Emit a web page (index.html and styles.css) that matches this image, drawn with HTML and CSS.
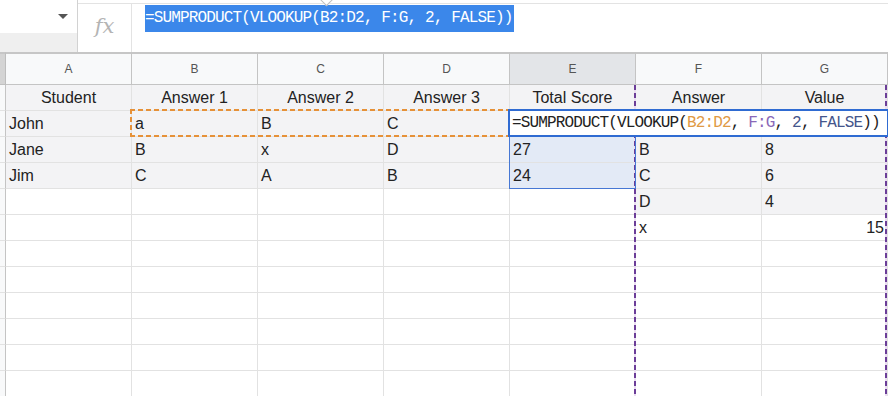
FILE: index.html
```html
<!DOCTYPE html>
<html lang="en">
  <head>
    <meta charset="UTF-8" />
    <title>Sheet</title>
    <link rel="stylesheet" href="styles.css">
  </head>
  <body>
    <div class="topbar">
      <div class="namebox">
        <div class="namebox-top"><span class="caret"></span></div>
        <div class="namebox-bottom"></div>
      </div>
      <div class="fxbox"><span>fx</span></div>
      <div class="formula">
        <span class="tip"></span>
        <span class="formula-sel">=SUMPRODUCT(VLOOKUP(B2:D2, F:G, 2, FALSE))</span>
      </div>
    </div>

    <div class="sheet">
      <!-- column headers -->
      <div class="corner"></div>
      <div class="ch">A</div>
      <div class="ch">B</div>
      <div class="ch">C</div>
      <div class="ch">D</div>
      <div class="ch active">E</div>
      <div class="ch">F</div>
      <div class="ch">G</div>

      <!-- row 1 -->
      <div class="rh"></div>
      <div class="c g center">Student</div>
      <div class="c g center">Answer 1</div>
      <div class="c g center">Answer 2</div>
      <div class="c g center">Answer 3</div>
      <div class="c g center">Total Score</div>
      <div class="c g center">Answer</div>
      <div class="c g center">Value</div>

      <!-- row 2 -->
      <div class="rh"></div>
      <div class="c g">John</div>
      <div class="c g">a</div>
      <div class="c g">B</div>
      <div class="c g">C</div>
      <div class="c g"></div>
      <div class="c g"></div>
      <div class="c g"></div>

      <!-- row 3 -->
      <div class="rh"></div>
      <div class="c g">Jane</div>
      <div class="c g">B</div>
      <div class="c g">x</div>
      <div class="c g">D</div>
      <div class="c picked">27</div>
      <div class="c g">B</div>
      <div class="c g">8</div>

      <!-- row 4 -->
      <div class="rh"></div>
      <div class="c g">Jim</div>
      <div class="c g">C</div>
      <div class="c g">A</div>
      <div class="c g">B</div>
      <div class="c picked">24</div>
      <div class="c g">C</div>
      <div class="c g">6</div>

      <!-- row 5 -->
      <div class="rh"></div>
      <div class="c"></div>
      <div class="c"></div>
      <div class="c"></div>
      <div class="c"></div>
      <div class="c"></div>
      <div class="c g">D</div>
      <div class="c g">4</div>

      <!-- row 6 -->
      <div class="rh"></div>
      <div class="c"></div>
      <div class="c"></div>
      <div class="c"></div>
      <div class="c"></div>
      <div class="c"></div>
      <div class="c">x</div>
      <div class="c num">15</div>

      <!-- empty rows -->
      <div class="rh"></div><div class="c"></div><div class="c"></div><div class="c"></div><div class="c"></div><div class="c"></div><div class="c"></div><div class="c"></div>
      <div class="rh"></div><div class="c"></div><div class="c"></div><div class="c"></div><div class="c"></div><div class="c"></div><div class="c"></div><div class="c"></div>
      <div class="rh"></div><div class="c"></div><div class="c"></div><div class="c"></div><div class="c"></div><div class="c"></div><div class="c"></div><div class="c"></div>
      <div class="rh"></div><div class="c"></div><div class="c"></div><div class="c"></div><div class="c"></div><div class="c"></div><div class="c"></div><div class="c"></div>
      <div class="rh"></div><div class="c"></div><div class="c"></div><div class="c"></div><div class="c"></div><div class="c"></div><div class="c"></div><div class="c"></div>
      <div class="rh"></div><div class="c"></div><div class="c"></div><div class="c"></div><div class="c"></div><div class="c"></div><div class="c"></div><div class="c"></div>

      <!-- overlays: ranges and the cell editor -->
      <div class="copy-range"></div>
      <div class="ref-line left"></div>
      <div class="ref-line right"></div>
      <div class="sel-box"></div>
      <div class="editor">=SUMPRODUCT(VLOOKUP(<span class="r-orange">B2:D2</span>, <span class="r-purple">F:G</span>, <span class="r-num">2</span>, <span class="r-num">FALSE</span>))</div>
    </div>
  </body>
</html>
```

FILE: styles.css
```css
body {
  margin: 0;
  width: 888px;
  height: 396px;
  overflow: hidden;
  background: #fff;
  font-family: "Liberation Sans", Arial, sans-serif;
  color: #222;
}

/* formula bar */
.topbar {
  display: flex;
  height: 52px;
}

.namebox {
  width: 77px;
  display: flex;
  flex-direction: column;
  border-right: 1px solid #d2d2d2;
}

.namebox-top {
  height: 33px;
  display: flex;
  align-items: center;
  justify-content: flex-end;
  padding-right: 9px;
}

.caret {
  width: 0;
  height: 0;
  border-left: 5px solid transparent;
  border-right: 5px solid transparent;
  border-top: 5px solid #555;
  margin-top: -1px;
}

.namebox-bottom {
  flex: 1;
  background: #efefef;
}

.fxbox {
  width: 53px;
  margin-top: 3px;
  border-top: 1px solid #e3e3e3;
  border-right: 1px solid #e3e3e3;
  display: flex;
  align-items: center;
  justify-content: center;
  padding-bottom: 4px;
}

.fxbox span {
  font-family: "DejaVu Serif", serif;
  font-style: italic;
  font-size: 21px;
  color: #b4b4b4;
}

.formula {
  flex: 1;
  position: relative;
  margin-top: 3px;
  border-top: 1px solid #e3e3e3;
  padding-left: 13px;
}

.formula-sel {
  display: inline-block;
  margin-top: 1px;
  height: 27px;
  line-height: 27px;
  background: #3b87ea;
  color: #fff;
  font-family: "Liberation Mono", monospace;
  font-size: 16px;
  letter-spacing: -0.85px;
  padding-right: 1px;
}

.tip {
  position: absolute;
  left: 189px;
  top: -11px;
  width: 10px;
  height: 10px;
  background: #fff;
  border-right: 1px solid #bdbdbd;
  border-bottom: 1px solid #bdbdbd;
  transform: rotate(45deg);
  z-index: 2;
}

/* grid */
.sheet {
  position: relative;
  display: grid;
  grid-template-columns: 6px repeat(7, 126px);
  grid-template-rows: 33px repeat(12, 26px);
}

.corner {
  background: #d4d4d4;
  border-top: 2px solid #c6c6c6;
  border-bottom: 1px solid #c0c0c0;
  border-right: 1px solid #bdbdbd;
}

.ch {
  background: #f8f9fa;
  border-top: 2px solid #c6c6c6;
  border-bottom: 1px solid #c4c4c4;
  border-right: 1px solid #c4c4c4;
  font-size: 12px;
  color: #555;
  display: flex;
  align-items: center;
  justify-content: center;
}

.ch.active {
  background: #e3e5e8;
}

.rh {
  background: #f8f9fa;
  border-right: 1px solid #c4c4c4;
  border-bottom: 1px solid #e2e2e2;
}

.c {
  border-right: 1px solid #e2e2e2;
  border-bottom: 1px solid #e2e2e2;
  padding: 0 3px;
  font-size: 16px;
  line-height: 25px;
  white-space: nowrap;
  overflow: hidden;
}

.c.g {
  background: #f3f3f5;
}

.c.center {
  text-align: center;
}

.c.num {
  text-align: right;
}

.c.picked {
  background: #e3eaf6;
}

/* overlays */
.copy-range {
  position: absolute;
  left: 130px;
  top: 57px;
  width: 380px;
  height: 28px;
  background:
    repeating-linear-gradient(90deg, #e69138 0 5px, transparent 5px 8px) top left / 100% 2px no-repeat,
    repeating-linear-gradient(90deg, #e69138 0 5px, transparent 5px 8px) bottom left / 100% 2px no-repeat,
    repeating-linear-gradient(180deg, #e69138 0 5px, transparent 5px 8px) top left / 2px 100% no-repeat;
}

.ref-line {
  position: absolute;
  top: 33px;
  bottom: 0;
  width: 2px;
  background: repeating-linear-gradient(180deg, #6b3d98 0 5px, #eadcf1 5px 8px);
}

.ref-line.left {
  left: 634px;
}

.ref-line.right {
  left: 885px;
}

.sel-box {
  position: absolute;
  left: 509px;
  top: 83px;
  width: 125px;
  height: 52px;
  border: 1px solid #4677d4;
}

.editor {
  position: absolute;
  left: 508px;
  top: 57px;
  width: 375px;
  height: 24px;
  border: 2px solid #2f6bd2;
  background: #fff;
  padding-left: 2px;
  font-family: "Liberation Mono", monospace;
  font-size: 16px;
  letter-spacing: -0.85px;
  line-height: 24px;
  color: #222;
  white-space: nowrap;
  z-index: 3;
}

.r-orange {
  color: #df9a45;
}

.r-purple {
  color: #8a68b8;
}

.r-num {
  color: #45568c;
}
```
